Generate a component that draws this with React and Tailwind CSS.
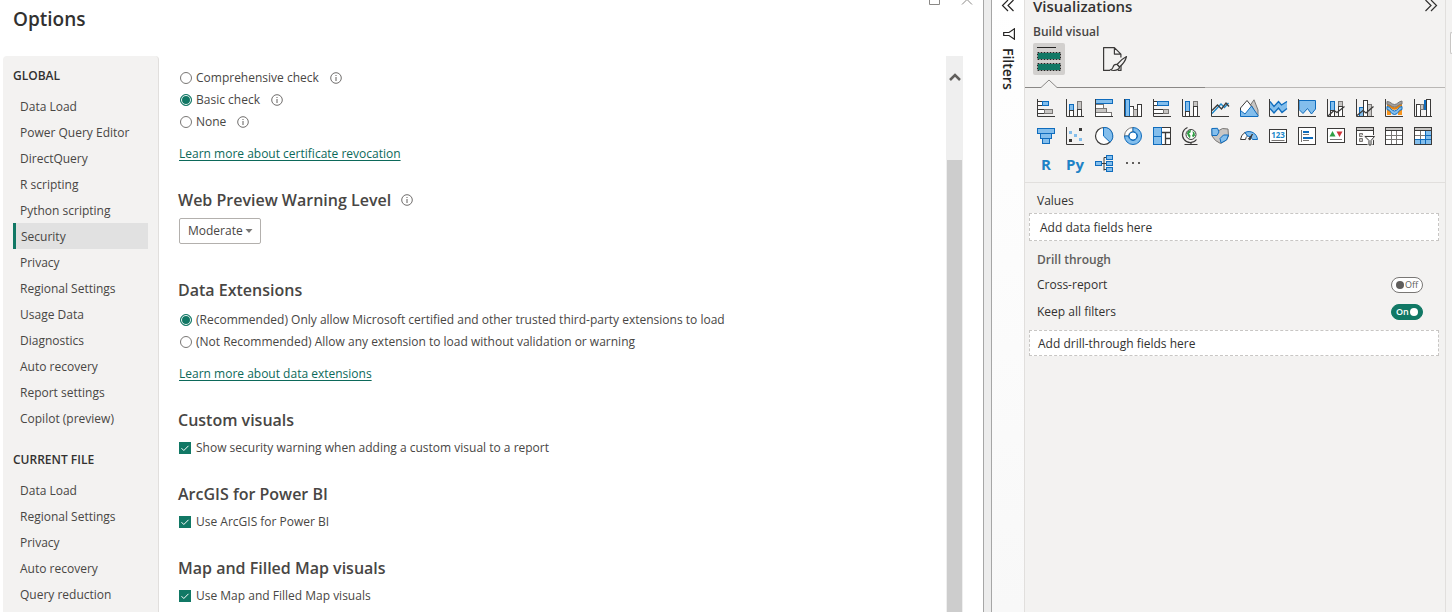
import React, { useState } from "react";
import clsx from "clsx";

const globalItems = [
  "Data Load", "Power Query Editor", "DirectQuery", "R scripting", "Python scripting",
  "Security", "Privacy", "Regional Settings", "Usage Data", "Diagnostics",
  "Auto recovery", "Report settings", "Copilot (preview)",
];

const fileItems = ["Data Load", "Regional Settings", "Privacy", "Auto recovery", "Query reduction"];

// colours shared by the visual icons
const DARK = "#3b3a39";
const BLUE = "#0f6cbd";
const SKY = "#83beec";
const GREY = "#797775";
const SILVER = "#c8c6c4";

const tones = {
  blue: [SKY, BLUE],
  grey: [SILVER, GREY],
  white: ["#fff", DARK],
  pale: ["#fff", GREY],
};

const Box = ({ x, y, w, h, t }) => (
  <rect x={x + 0.5} y={y + 0.5} width={w} height={h} fill={tones[t][0]} stroke={tones[t][1]} />
);

const Axis = () => <path d="M.5 0V17.5H18" fill="none" stroke={DARK} />;

const Line = ({ d, c = DARK }) => <path d={d} fill="none" stroke={c} strokeWidth="1.3" />;

const visuals = [
  ["Stacked bar chart", <>
    <Box x={0} y={2} w={5} h={4} t="white" /><Box x={5} y={2} w={6} h={4} t="blue" />
    <Box x={0} y={10} w={7} h={4} t="white" /><Box x={7} y={10} w={8} h={4} t="grey" /><Axis /></>],
  ["Stacked column chart", <>
    <Box x={3} y={5} w={4} h={6} t="blue" /><Box x={3} y={11} w={4} h={6} t="white" />
    <Box x={11} y={2} w={4} h={8} t="grey" /><Box x={11} y={10} w={4} h={7} t="white" /><Axis /></>],
  ["Clustered bar chart", <>
    <Box x={0} y={5} w={8} h={4} t="pale" /><Box x={0} y={9} w={11} h={4} t="grey" />
    <Box x={0} y={13} w={16} h={4} t="pale" /><Box x={0} y={0} w={17} h={4} t="blue" /><Axis /></>],
  ["Clustered column chart", <>
    <Box x={5} y={7} w={4} h={10} t="white" /><Box x={9} y={10} w={4} h={7} t="grey" />
    <Box x={13} y={5} w={4} h={12} t="white" /><Box x={1} y={0} w={4} h={17} t="blue" /><Axis /></>],
  ["100% stacked bar chart", <>
    <Box x={0} y={2} w={4} h={4} t="white" /><Box x={4} y={2} w={11} h={4} t="blue" />
    <Box x={0} y={10} w={10} h={4} t="white" /><Box x={10} y={10} w={5} h={4} t="grey" /><Axis /></>],
  ["100% stacked column chart", <>
    <Box x={3} y={2} w={4} h={10} t="blue" /><Box x={3} y={12} w={4} h={5} t="white" />
    <Box x={11} y={2} w={4} h={5} t="grey" /><Box x={11} y={7} w={4} h={10} t="white" /><Axis /></>],
  ["Line chart", <>
    <Line d="M1 14.5L10 5l3.5 3.5L17.5 4" c="#1b87c9" /><Line d="M1 11.5L6.5 6l4 4L15 4l3 3.5" /><Axis /></>],
  ["Area chart", <>
    <path d="M9 8L14 .8 18 11v6H9z" fill={SILVER} stroke={GREY} />
    <path d="M.5 17V9L7 1.500l6 7.500v8z" fill="#fff" stroke={DARK} />
    <path d="M.5 17.5V11.5L5 15l6.500-8 6.500 9.500v1z" fill={SKY} stroke={BLUE} /></>],
  ["Stacked area chart", <>
    <path d="M1 2.5L5 7.5l4.500-5 3 3L18 2v8h-1l-4 3.500-3.500-4L5 14l-4-4z" fill={SKY} />
    <Line d="M1 2.500L5 7.500l4.500-5 3 3.500L18 2.500" c={BLUE} />
    <Line d="M1 9.500L5 14l4.500-5 3.500 4.500L18 9.500" c={BLUE} /><Axis /></>],
  ["100% stacked area chart", <>
    <path d="M1 1.500h16.500V10l-4 5L9.500 9.500 5 14.500l-4-4z" fill={SKY} stroke={BLUE} /><Axis /></>],
  ["Line and stacked column chart", <>
    <Box x={3} y={2} w={4} h={9} t="blue" /><Box x={3} y={11} w={4} h={6} t="white" />
    <Box x={11} y={2} w={4} h={5} t="grey" /><Box x={11} y={7} w={4} h={10} t="white" />
    <Line d="M1 17l6-5.5 3 2L17.5 7.5" /><Axis /></>],
  ["Line and clustered column chart", <>
    <Box x={3} y={8} w={4} h={9} t="blue" /><Box x={11} y={5} w={4} h={12} t="grey" />
    <Box x={7} y={1} w={4} h={16} t="white" />
    <Line d="M1 16.5l6-5 3 2.5 7.5-6.5" /><Axis /></>],
  ["Ribbon chart", <>
    <path d="M2 10h4v6H2zM13 10h4v6h-4z" fill="#f7941d" />
    <path d="M2 6c4 0 4.500 3.500 7.500 3.500S13 6 17 6" fill="none" stroke="#e8830c" strokeWidth="2.500" />
    <path d="M2 2.500c4 0 4.500 3 7.500 3s3.500-3 7.500-3.500v3c-4 0-4 3-7.500 3s-4-2.500-7.500-2.500z" fill="#a19f9d" stroke={GREY} />
    <path d="M2 7.500c4 0 4 4.500 7.500 4.500s3.500-4.500 7.500-4.500v3c-3.500 0-3.500 5-7.500 5s-4-5-7.500-5z" fill={SKY} stroke={BLUE} />
    <Axis /></>],
  ["Waterfall chart", <>
    <Box x={2} y={5} w={4} h={12} t="white" /><Box x={6} y={5} w={3} h={5} t="grey" />
    <Box x={12} y={0} w={4} h={17} t="white" />
    <rect x="10" y="1" width="2" height="10" fill={BLUE} /><Axis /></>],
  ["Funnel", <>
    <Box x={0} y={1} w={17} h={5} t="blue" /><Box x={3} y={6} w={11} h={5} t="blue" />
    <Box x={5} y={11} w={7} h={5} t="blue" /></>],
  ["Scatter chart", <>
    <path d="M13 1h3v3h-3zM3 12h3v3H3z" fill={DARK} />
    <path d="M3 4h3v3H3zM8 7h3v3H8zM13 11h3v3h-3z" fill="#83beec" /><Axis /></>],
  ["Pie chart", <>
    <circle cx="9" cy="9" r="8.5" fill="#fff" stroke={DARK} strokeWidth="1.2" />
    <path d="M8.5 9V.5a8.5 8.5 0 0 1 6.500 14.700z" fill={SKY} stroke={BLUE} /></>],
  ["Donut chart", <>
    <path d="M9 .5A8.5 8.5 0 0 0 .5 9H4.5A4.5 4.5 0 0 1 9 4.5z" fill="#fff" stroke={GREY} />
    <path d="M9 .5A8.5 8.5 0 1 1 .5 9H4.5A4.5 4.5 0 1 0 9 4.5z" fill={SKY} stroke={BLUE} />
    <circle cx="9" cy="9" r="4" fill="#fff" stroke={BLUE} /></>],
  ["Treemap", <>
    <Box x={8} y={0} w={9} h={17} t="white" /><Line d="M8.5 5.5h9M12.5 5.5v12M12.5 11.5h5" />
    <Box x={0} y={0} w={8} h={9} t="blue" /><Box x={0} y={9} w={8} h={8} t="blue" /></>],
  ["Map", <>
    <circle cx="9" cy="7.5" r="5" fill="#fff" stroke={DARK} />
    <path d="M5 6.500c0-2 2-3.500 4-3.500L8.5 5.500 7 6.500l1.500 2L8 11.500 6 9zM10.500 4l2 1.500.5 3-2 2-1-2 1-1.500z" fill="#2f9e44" />
    <path d="M5.500.5A7.800 7.800 0 1 0 14.500 12.500M9 15v2.500M2.500 17.500h13" fill="none" stroke={DARK} strokeWidth="1.2" /></>],
  ["Filled map", <>
    <path d="M1 2l3-.5 4 2 3.500-2L17 2l.5 7-2 4-6 3.500-5-3L1 9z" fill={SILVER} stroke={GREY} />
    <path d="M.8 1.500L6.500 1.300 8 5 6 8.500H1zM9 11.500l3.500-3.500h5l-2 5L10 16z" fill={SKY} stroke={BLUE} /></>],
  ["Gauge", <>
    <path d="M.5 12.500A8.500 9 0 0 1 5 5.500l2.500 3.500A5 5 0 0 0 5.500 12.500z" fill="#fff" stroke={DARK} />
    <path d="M5 5.500A8.600 8.600 0 0 1 17.500 12.500h-5A5 5 0 0 0 7.500 9z" fill={SKY} stroke={BLUE} />
    <path d="M8.500 12l4-5L10 13z" fill={DARK} stroke={DARK} /></>],
  ["Card", <>
    <rect x=".5" y="2.500" width="17" height="13" fill="#fff" stroke={DARK} />
    <text x="9" y="11" textAnchor="middle" fontSize="8" fill="#1b87c9">123</text>
    <path d="M2.500 13.500h13" stroke={GREY} /></>],
  ["Multi-row card", <>
    <Box x={0} y={0} w={17} h={17} t="white" /><path d="M3.500 3v12M5 7.500h6M5 13.500h6" stroke={GREY} />
    <path d="M5 5h6M5 11h10" stroke={BLUE} strokeWidth="2" /></>],
  ["KPI", <>
    <rect x=".5" y="1.500" width="17" height="14" fill="#fff" stroke={DARK} />
    <path d="M2.500 9.500L5.500 4l3 5.500z" fill="#2f9e44" /><path d="M9.500 4.500h6l-3 5.500z" fill="#d13438" />
    <path d="M3 12.500h12" stroke={GREY} /></>],
  ["Slicer", <>
    <rect x=".5" y=".5" width="17" height="17" fill="#fff" stroke={DARK} />
    <path d="M1 1h16v2.500H1z" fill={SILVER} /><path d="M1 3.500h16" stroke={DARK} />
    <path d="M3.500 6.500h3v3h-3zM3.500 11.500h3v3h-3z" fill={SILVER} stroke={GREY} />
    <path d="M9 9.500h9.500l-3.500 4v4.500h-2v-4.500z" fill="#fff" stroke="#f3f2f1" strokeWidth="3" />
    <path d="M9 9.500h9.500l-3.500 4v4.500h-2v-4.500z" fill="#fff" stroke={DARK} /></>],
  ["Table", <>
    <Box x={0} y={0} w={17} h={17} t="white" /><path d="M1 1h16v2.500H1z" fill={SILVER} />
    <path d="M1 3.500h16" stroke={DARK} />
    <path d="M1 8.500h16M1 12.500h16M6.500 4v13M11.500 4v13" stroke={GREY} /></>],
  ["Matrix", <>
    <Box x={0} y={0} w={17} h={17} t="white" /><path d="M1 1h16v2.500H1z" fill={SILVER} />
    <path d="M11 4h6v13H1v-4.500h10z" fill={SKY} />
    <path d="M1 8.500h10M6.500 4v9" stroke={GREY} />
    <path d="M11 8.500h6M1 12.500h16M6.500 13v4M11.500 4v13" stroke={BLUE} />
    <path d="M1 3.500h16M.5 .5v17h17v-17" stroke={DARK} fill="none" /></>],
  ["R script visual", "R"],
  ["Python visual", "Py"],
  ["Decomposition tree", <>
    <path d="M6 8.500h5M9 2.500v13M9 2.500h2M9 14.500h2" fill="none" stroke={DARK} />
    <Box x={0} y={6} w={6} h={4} t="blue" /><Box x={11} y={0} w={6} h={4} t="blue" />
    <Box x={11} y={6} w={6} h={4} t="blue" /><Box x={11} y={12} w={6} h={4} t="blue" /></>],
  ["Get more visuals", <path d="M2 7h2v2H2zM8 7h2v2H8zM14 7h2v2h-2z" fill="#605e5c" />],
];

const VisualButton = ({ name, art }) => (
  <button aria-label={name} className="flex size-[18px] items-center justify-center text-[15px] font-bold text-[#1f83c6]">
    {typeof art === "string" ? art : (
      <svg width="18" height="18" viewBox="0 0 18 18" className="shrink-0 overflow-visible">{art}</svg>
    )}
  </button>
);

const Info = () => (
  <svg width="12" height="12" viewBox="0 0 12 12" className="shrink-0" fill="none" stroke="#605e5c">
    <circle cx="6" cy="6" r="5.3" strokeWidth=".9" />
    <path d="M6 5v4M6 3v1" />
  </svg>
);

const Radio = ({ name, label, defaultChecked, info }) => (
  <div className="flex h-[22px] items-center gap-[11px] pl-0.5">
    <label className="flex items-center gap-1">
      <input
        type="radio"
        name={name}
        defaultChecked={defaultChecked}
        className="size-3 appearance-none rounded-full border border-[#797775] bg-white checked:border-[#117865] checked:bg-[#117865] checked:shadow-[inset_0_0_0_1px_white]"
      />
      {label}
    </label>
    {info && <Info />}
  </div>
);

const Check = ({ label }) => (
  <label className="mt-[3px] flex h-[22px] items-center gap-[5px] pl-px">
    <span className="grid size-3 place-items-center">
      <input type="checkbox" defaultChecked className="peer col-start-1 row-start-1 size-3 appearance-none border border-[#117865] checked:bg-[#117865]" />
      <svg width="12" height="12" viewBox="0 0 12 12" className="pointer-events-none invisible col-start-1 row-start-1 peer-checked:visible">
        <path d="M2.5 6.2l2.300 2.300L9.500 3.800" fill="none" stroke="#fff" />
      </svg>
    </span>
    {label}
  </label>
);

const Heading = ({ children }) => (
  <h2 className="mt-[21px] flex h-7 items-center gap-[10px] text-base font-semibold">{children}</h2>
);

const LearnMore = ({ children }) => (
  <div className="mt-[10px] flex h-[22px] items-center pl-px">
    <a href="#" className="text-[#0c695a] underline underline-offset-2">{children}</a>
  </div>
);

const NavGroup = ({ title, items, active, onSelect }) => (
  <div className="mb-[10px]">
    <h3 className="flex h-9 items-center pt-0.5 pl-[10px] text-xs font-semibold text-[#323130]">{title}</h3>
    <ul>
      {items.map((item) => (
        <li key={item} className="pr-[10px] pl-[10px]">
          <button
            onClick={() => onSelect(title + item)}
            className={clsx(
              "flex h-[26px] w-full items-center pt-0.5 text-left",
              active === title + item ? "border-l-[3px] border-[#117865] bg-[#e1e1e1] pl-[5px]" : "pl-[7px]"
            )}
          >
            {item}
          </button>
        </li>
      ))}
    </ul>
  </div>
);

const OptionsDialog = () => {
  const [active, setActive] = useState("GLOBALSecurity");

  return (
    <section className="flex min-w-0 flex-1 flex-col border-r border-[#a6a6a6] bg-white text-[#484644]">
      <header className="flex h-14 shrink-0 items-start justify-between pr-[10px] pl-[13px]">
        <h1 className="pt-[5px] text-[19px] leading-7 font-semibold text-[#323130]">Options</h1>
        <div className="flex gap-5 text-[#8a8886]">
          <button aria-label="Maximize">
            <svg width="12" height="5" viewBox="0 0 12 5" fill="none" stroke="currentColor"><path d="M.5 0v4.500h10V0" /></svg>
          </button>
          <button aria-label="Close">
            <svg width="12" height="5" viewBox="0 0 12 5" fill="none" stroke="currentColor"><path d="M1 4.500L6 -.5l5 5" /></svg>
          </button>
        </div>
      </header>
      <div className="flex min-h-0 flex-1">
        <nav className="ml-[3px] w-39 shrink-0 overflow-hidden rounded-t border-r border-[#e1dfdd] bg-[#f3f2f1] pt-px">
          <NavGroup title="GLOBAL" items={globalItems} active={active} onSelect={setActive} />
          <NavGroup title="CURRENT FILE" items={fileItems} active={active} onSelect={setActive} />
        </nav>

        <main className="min-w-0 flex-1 overflow-hidden pt-[11px] pl-[19px]">
          <Radio name="revocation" label="Comprehensive check" info />
          <Radio name="revocation" label="Basic check" defaultChecked info />
          <Radio name="revocation" label="None" info />
          <LearnMore>Learn more about certificate revocation</LearnMore>

          <Heading><label htmlFor="level">Web Preview Warning Level</label> <Info /></Heading>
          <div className="mt-1 mb-8 ml-px grid w-[82px] items-center">
            <select id="level" className="col-start-1 row-start-1 h-[26px] appearance-none rounded-xs border border-[#b3b0ad] bg-white pl-2">
              <option>Moderate</option>
            </select>
            <svg width="8" height="4" viewBox="0 0 8 4" className="pointer-events-none col-start-1 row-start-1 mr-2 justify-self-end">
              <path d="M.5 0h7L4 4z" fill="#797775" />
            </svg>
          </div>

          <Heading>Data Extensions</Heading>
          <div className="pt-[5px]">
            <Radio name="extensions" label="(Recommended) Only allow Microsoft certified and other trusted third-party extensions to load" defaultChecked />
            <Radio name="extensions" label="(Not Recommended) Allow any extension to load without validation or warning" />
          </div>
          <LearnMore>Learn more about data extensions</LearnMore>

          <Heading>Custom visuals</Heading>
          <Check label="Show security warning when adding a custom visual to a report" />
          <Heading>ArcGIS for Power BI</Heading>
          <Check label="Use ArcGIS for Power BI" />
          <Heading>Map and Filled Map visuals</Heading>
          <Check label="Use Map and Filled Map visuals" />
        </main>

        {/* SCROLLBAR */}
        <div className="mr-5 flex w-[17px] flex-col bg-[#efefef] px-px">
          <button aria-label="Scroll up" className="flex h-26 justify-center pt-4">
            <svg width="12" height="10" viewBox="0 0 12 10"><path d="M1 8l5-5 5 5" fill="none" stroke="#605e5c" strokeWidth="2.500" /></svg>
          </button>
          <div className="flex-1 bg-[#cdcdcd]" />
        </div>
      </div>
    </section>
  );
}

const FiltersStrip = () => (
  <aside className="flex w-[33px] shrink-0 flex-col items-center border-l border-[#a6a6a6] bg-linear-to-b from-white to-[#f8f8f8] text-[#252423]">
    <button aria-label="Expand filters">
      <svg width="14" height="12" viewBox="0 0 14 12" fill="none" stroke="currentColor" strokeWidth="1.2"><path d="M7 0L1.500 5.500 7 11M12.500 0L7 5.500l5.500 5.500" /></svg>
    </button>
    <svg width="14" height="12" viewBox="0 0 14 12" className="mt-4" fill="none" stroke="currentColor" strokeWidth="1.2">
      <path d="M13.400.8v10.400L8 7.500H2.700V4.500H8z" />
    </svg>
    <h2 className="mt-2 text-sm leading-5 font-semibold [writing-mode:vertical-rl]">Filters</h2>
  </aside>
);

const Toggle = ({ label, defaultChecked }) => {
  const [on, setOn] = useState(defaultChecked);
  return (
    <label className="flex h-[27px] items-center justify-between pr-[22px] pl-3">
      {label}
      <span className={clsx(
        "flex h-4 w-8 items-center justify-between rounded-full border px-1 text-[9px]",
        on ? "border-[#117865] bg-[#117865] font-semibold text-white" : "flex-row-reverse border-[#797775] bg-white text-[#605e5c]"
      )}>
        <input type="checkbox" role="switch" className="sr-only" checked={on} onChange={() => setOn(!on)} />
        <span>{on ? "On" : "Off"}</span>
        <span className={clsx("size-2 rounded-full", on ? "bg-white" : "bg-[#605e5c]")} />
      </span>
    </label>
  );
}

const VisualizationsPane = () => (
  <aside className="w-[422px] shrink-0 border-x border-[#e1dfdd] bg-[#f3f2f1] text-[#323130]">
    <div className="flex h-3 items-center justify-between pr-[7px] pl-2">
      <h2 className="text-[15px] leading-3 font-semibold">Visualizations</h2>
      <button aria-label="Collapse pane">
        <svg width="14" height="12" viewBox="0 0 14 12" fill="none" stroke="currentColor" strokeWidth="1.2"><path d="M1.500 0L7 5.500 1.500 11M7 0l5.500 5.500L7 11" /></svg>
      </button>
    </div>
    <h3 className="mt-3 pl-2 leading-4 font-semibold text-[#484644]">Build visual</h3>
    <div className="mt-[3px] flex gap-[34px] pl-2">
      <button aria-label="Build visual" className="flex size-8 items-center justify-center rounded-xs bg-[#d2d0ce]">
        <svg width="24" height="24" viewBox="0 0 24 24">
          <path d="M0 .5h19" stroke="#252423" />
          <path d="M.5 5.500h23v7H.5zM.5 16.500h23v7H.5z" fill="#117865" stroke="#fff" />
          <path d="M.5 5.500h23v7H.5zM.5 16.500h23v7H.5z" fill="none" stroke="#252423" strokeDasharray="2 1" />
        </svg>
      </button>
      <button aria-label="Format visual" className="flex size-8 items-center justify-center">
        <svg width="26" height="26" viewBox="0 0 26 26" fill="none" stroke="#3b3a39" strokeWidth="1.2" strokeLinejoin="round">
          <path d="M8 24.400H1.600V1.600h10.800l6.500 6.500v3.400M12.400 1.600V8.100h6.500M19 19v5.400h-3" />
          <path d="M24.500 10.500c-3 1.500-7 5-9.500 8l2.500 2.500c3-2.500 6.200-7 7-10.500z" fill="#f3f2f1" />
          <path d="M15 18.500c-2.200-.3-3.500.8-3.900 2.500-.3 1.500-1.100 2.500-2.800 2.800 3 1.400 9.300.5 9.200-2.800z" fill="#f3f2f1" />
        </svg>
      </button>
    </div>

    {/* the line with a notch under the active tab */}
    <div className="mt-1 flex items-end">
      <span className="h-px w-4 bg-[#8a8886]" />
      <svg width="16" height="9" viewBox="0 0 16 9" fill="none" stroke="#8a8886"><path d="M0 8.500L8 1l8 7.500" /></svg>
      <span className="h-px w-37 bg-[#8a8886]" />
      <span className="h-px flex-1 bg-[#b9b7b5]" />
    </div>

    <div className="mt-[11px] flex flex-wrap gap-x-[11px] gap-y-[10px] border-b border-[#e1dfdd] pb-[9px] pl-3">
      {visuals.map(([name, art]) => <VisualButton key={name} name={name} art={art} />)}
    </div>

    <h4 className="mt-2 pl-3 leading-5">Values</h4>
    <div className="mt-0.5 mr-1.5 ml-1 flex h-7 items-center border border-dashed border-[#c8c6c4] bg-white pt-0.5 pl-[10px]">Add data fields here</div>
    <h4 className="mt-[9px] pl-3 leading-5 font-semibold text-[#605e5c]">Drill through</h4>
    <div className="mt-px">
      <Toggle label="Cross-report" defaultChecked={false} />
      <Toggle label="Keep all filters" defaultChecked={true} />
    </div>
    <div className="mt-[5px] mr-1.5 ml-1 flex h-[26px] items-center border border-dashed border-[#c8c6c4] bg-white pt-0.5 pl-2">Add drill-through fields here</div>
  </aside>
);

export default function App() {
  return (
    <div className="flex h-screen overflow-hidden bg-[#ececec] font-['Open_Sans','Noto_Sans',sans-serif] text-xs">
      <OptionsDialog />
      <div className="w-[7px] shrink-0" />
      <FiltersStrip />
      <VisualizationsPane />
      <div className="flex w-1.5 shrink-0 flex-col items-end bg-[#f3f2f1] pt-8">
        <div className="h-[22px] w-0.5 rounded-l-xs border border-r-0 border-[#c8c6c4] bg-white" />
      </div>
    </div>
  );
}
